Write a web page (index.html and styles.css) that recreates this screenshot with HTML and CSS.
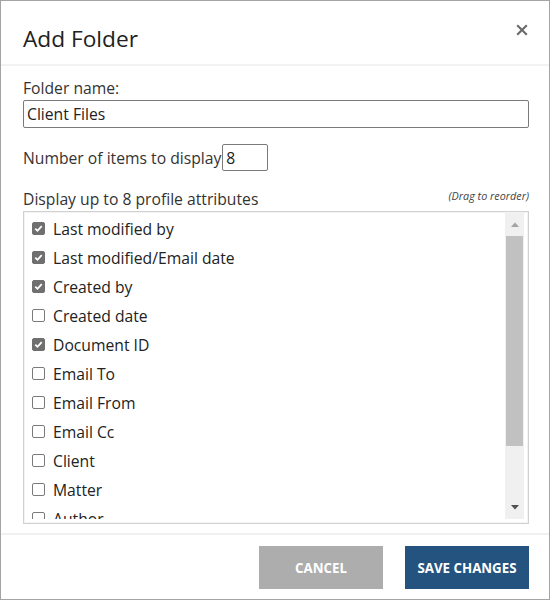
FILE: index.html
```html
<!DOCTYPE html>
<html>
<head>
<meta charset="utf-8">
<link rel="stylesheet" href="styles.css">
</head>
<body>
<div class="dialog">
  <div class="header">
    <div class="title">Add Folder</div>
    <svg class="close" width="12" height="12" viewBox="0 0 12 12"><path d="M1.2 1.2 L10.8 10.8 M10.8 1.2 L1.2 10.8" stroke="#6a6a6a" stroke-width="2.1" stroke-linecap="butt"/></svg>
  </div>
  <div class="body">
    <div class="label">Folder name:</div>
    <div class="input wide">Client Files</div>
    <div class="count-row">
      <span class="label">Number of items to display</span>
      <div class="input small">8</div>
    </div>
    <div class="attr-head">
      <span class="label">Display up to 8 profile attributes</span>
      <span class="hint">(Drag to reorder)</span>
    </div>
    <div class="list">
      <div class="items">
        <div class="item"><span class="cb checked"><svg width="9" height="9" viewBox="0 0 9 9"><path d="M1.3 4.6 L3.5 6.8 L7.7 2.2" fill="none" stroke="#fff" stroke-width="1.8"/></svg></span>Last modified by</div>
        <div class="item"><span class="cb checked"><svg width="9" height="9" viewBox="0 0 9 9"><path d="M1.3 4.6 L3.5 6.8 L7.7 2.2" fill="none" stroke="#fff" stroke-width="1.8"/></svg></span>Last modified/Email date</div>
        <div class="item"><span class="cb checked"><svg width="9" height="9" viewBox="0 0 9 9"><path d="M1.3 4.6 L3.5 6.8 L7.7 2.2" fill="none" stroke="#fff" stroke-width="1.8"/></svg></span>Created by</div>
        <div class="item"><span class="cb"></span>Created date</div>
        <div class="item"><span class="cb checked"><svg width="9" height="9" viewBox="0 0 9 9"><path d="M1.3 4.6 L3.5 6.8 L7.7 2.2" fill="none" stroke="#fff" stroke-width="1.8"/></svg></span>Document ID</div>
        <div class="item"><span class="cb"></span>Email To</div>
        <div class="item"><span class="cb"></span>Email From</div>
        <div class="item"><span class="cb"></span>Email Cc</div>
        <div class="item"><span class="cb"></span>Client</div>
        <div class="item"><span class="cb"></span>Matter</div>
        <div class="item"><span class="cb"></span>Author</div>
      </div>
      <div class="scrollbar">
        <div class="arrow up"><svg width="8" height="5" viewBox="0 0 8 5"><path d="M0 5 L4 0.5 L8 5 Z" fill="#a3a3a3"/></svg></div>
        <div class="thumb"></div>
        <div class="track"></div>
        <div class="arrow down"><svg width="8" height="5" viewBox="0 0 8 5"><path d="M0 0 L4 4.5 L8 0 Z" fill="#505050"/></svg></div>
      </div>
    </div>
  </div>
  <div class="footer">
    <div class="btn cancel">CANCEL</div>
    <div class="btn save">SAVE CHANGES</div>
  </div>
</div>
</body>
</html>
```

FILE: styles.css
```css
html, body {
  margin: 0;
  padding: 0;
  background: #fff;
}
body {
  font-family: "Open Sans", "Noto Sans", sans-serif;
  color: #333;
}
.dialog {
  width: 550px;
  height: 600px;
  box-sizing: border-box;
  border: 1px solid #a4a4a4;
  display: flex;
  flex-direction: column;
}
.header {
  height: 65px;
  flex: none;
  box-sizing: border-box;
  padding: 23px 22px 0 22px;
  border-bottom: 2px solid #f2f2f2;
  display: flex;
  justify-content: space-between;
  align-items: flex-start;
}
.title {
  font-size: 22.7px;
  line-height: 30px;
  color: #222;
}
.close {
  margin-top: 0;
  margin-right: -1px;
}
.body {
  padding: 12px 20px 9px 22px;
  display: flex;
  flex-direction: column;
}
.label {
  font-size: 15.7px;
  line-height: 20px;
  color: #333;
}
.input {
  box-sizing: border-box;
  border: 1px solid #7a7a7a;
  border-radius: 2px;
  font-size: 15.7px;
  color: #222;
  padding: 0 3px;
  display: flex;
  align-items: center;
}
.input.wide {
  margin-top: 2px;
  height: 28px;
}
.count-row {
  margin-top: 16px;
  height: 27px;
  display: flex;
  align-items: center;
}
.input.small {
  width: 46px;
  height: 27px;
  margin-left: 1px;
}
.attr-head {
  margin-top: 18px;
  display: flex;
  justify-content: space-between;
  align-items: flex-start;
}
.hint {
  font-size: 10.8px;
  font-style: italic;
  line-height: 14px;
  color: #444;
}
.list {
  margin-top: 2px;
  height: 313px;
  box-sizing: border-box;
  border: 1px solid #d2d2d2;
  box-shadow: inset 0 0 0 1px #f3f3f3;
  padding: 1px 4px 4px 0;
  display: flex;
}
.items {
  flex: 1;
  overflow: hidden;
  padding: 1px 0 0 8px;
}
.item {
  height: 29px;
  display: flex;
  align-items: center;
  font-size: 15.7px;
  color: #222;
}
.cb {
  width: 13px;
  height: 13px;
  box-sizing: border-box;
  border: 1px solid #7a7a7a;
  border-radius: 2px;
  background: #fff;
  margin-right: 8px;
  display: flex;
  align-items: center;
  justify-content: center;
  flex: none;
}
.cb.checked {
  background: #6f6f6f;
  border-color: #6f6f6f;
}
.scrollbar {
  width: 19px;
  background: #f0f0f0;
  display: flex;
  flex-direction: column;
  align-items: center;
}
.arrow {
  height: 23px;
  width: 100%;
  display: flex;
  align-items: center;
  justify-content: center;
  flex: none;
}
.thumb {
  width: 17px;
  height: 210px;
  background: #c1c1c1;
  flex: none;
}
.track {
  flex: 1;
}
.footer {
  border-top: 2px solid #f0f0f0;
  padding: 11px 20px 0 0;
  display: flex;
  justify-content: flex-end;
  gap: 22px;
}
.btn {
  width: 124px;
  height: 43px;
  display: flex;
  align-items: center;
  justify-content: center;
  color: #fff;
  font-size: 13.3px;
  font-weight: 700;
  letter-spacing: 0;
}
.cancel {
  background: #adadad;
}
.save {
  background: #245380;
}
```
